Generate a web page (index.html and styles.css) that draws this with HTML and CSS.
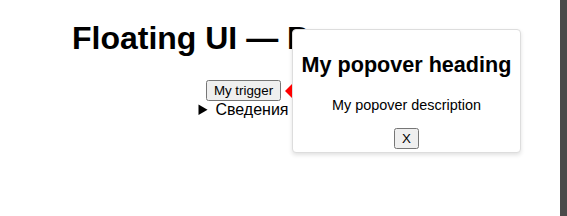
FILE: index.html
```html
<!DOCTYPE html>
<html lang="ru">
<head>
  <meta charset="UTF-8" />
  <meta name="viewport" content="width=device-width, initial-scale=1.0" />
  <title>Floating UI — Popover</title>
  <link rel="stylesheet" href="styles.css">
</head>
<body>
  <main class="page">
    <h1>Floating UI — Popover</h1>

    <div class="trigger-row">
      <button id="trigger">My trigger</button>
    </div>

    <details class="info">
      <summary>Сведения</summary>
      <p>Всплывающее окно, позиционированное справа от кнопки.</p>
    </details>
  </main>

  <div class="rail"></div>

  <div class="popover" id="popover">
    <div class="arrow"></div>
    <h2>My popover heading</h2>
    <p>My popover description</p>
    <div class="popover-actions">
      <button id="closeBtn">X</button>
    </div>
  </div>
</body>
</html>
```

FILE: styles.css
```css
body {
  font-family: "Liberation Sans", Arial, sans-serif;
  margin: 0;
  display: flex;
  min-height: 100vh;
  background: #fff;
  color: #000;
}
.page {
  width: 471px;
  padding: 8px;
  text-align: center;
}
.rail {
  margin-left: auto;
  width: 7px;
  background: #4a4a4a;
}
h1 {
  font-size: 32px;
  margin: 12px 0 23px;
}
button {
  font-family: "Liberation Sans", Arial, sans-serif;
  font-size: 13.33px;
}
.trigger-row {
  display: flex;
  justify-content: center;
}
.info summary {
  font-size: 16px;
}
.popover {
  position: absolute;
  left: 292px;
  top: 29px;
  width: 229px;
  box-sizing: border-box;
  padding: 4px 8px 3px;
  background: #fff;
  border: 1px solid #ddd;
  border-radius: 4px;
  box-shadow: 0 2px 4px rgba(0, 0, 0, 0.12);
  font-size: 14.4px;
  text-align: center;
}
.popover h2 {
  font-size: 1.5em;
  margin: 0.83em 0 0.9em;
  white-space: nowrap;
}
.popover p {
  margin: 1em 0;
}
.popover-actions {
  display: flex;
  justify-content: center;
}
.arrow {
  position: absolute;
  left: -8px;
  top: 54px;
  width: 0;
  height: 0;
  border-top: 7px solid transparent;
  border-bottom: 7px solid transparent;
  border-right: 7px solid #f00;
}
```
